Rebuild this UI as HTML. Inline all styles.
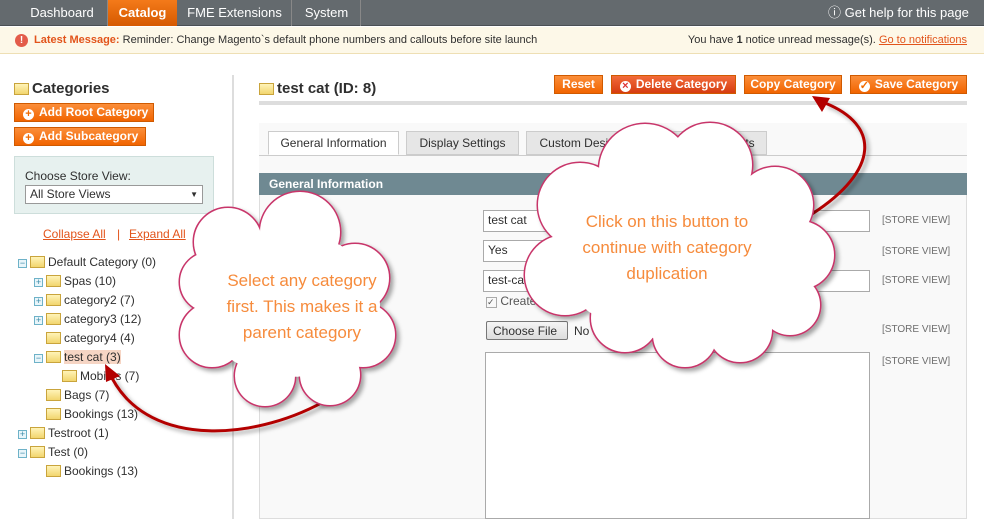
<!DOCTYPE html>
<html><head><style>
*{margin:0;padding:0;box-sizing:border-box}
body{width:984px;height:519px;overflow:hidden;background:#fff;font-family:"Liberation Sans",Arial,sans-serif;font-size:12px;color:#2f2f2f;position:relative}
.abs{position:absolute}
.nav{left:0;top:0;width:984px;height:26px;background:#646a6e;border-bottom:1px solid #4b5054}
.nav span{position:absolute;top:0;height:26px;line-height:26px;color:#fff;font-size:13px;text-align:center}
.msg{left:0;top:27px;width:984px;height:27px;background:#fdf8e8;border-bottom:1px solid #eedfb4;line-height:27px;font-size:11px}
.btn{position:absolute;height:19px;background:linear-gradient(#fb8e3a,#f16400);border:1px solid #d05a00;color:#fff;font-weight:bold;font-size:12px;line-height:17px;text-align:center}
.ic{display:inline-block;width:11px;height:11px;border-radius:50%;background:#fff;color:#f06a00;font-size:11px;line-height:11px;text-align:center;vertical-align:-1px;margin-right:5px}
.tree div{position:absolute;font-size:12px;white-space:nowrap}
.fold{display:inline-block;width:15px;height:12px;background:linear-gradient(#fff3b8,#f2d56e);border:1px solid #c9a43c;vertical-align:-2px;margin-right:3px}
.pm{display:inline-block;width:9px;height:9px;border:1px solid #6eb2c8;background:#e8f5fa;vertical-align:0;margin-right:3px;font-size:9px;line-height:7px;text-align:center;color:#3a8aa8}
.sv{position:absolute;left:882px;font-size:10px;color:#6e6e6e}
.inp{position:absolute;border:1px solid #aaa;background:#fff;font-size:12px;padding:2px 4px;height:22px}
.tab{position:absolute;top:131px;height:24px;border:1px solid #ccc;background:#e6e6e6;line-height:22px;font-size:12px;text-align:center}
</style></head><body>
<div class="abs nav">
<span style="left:18px;width:88px">Dashboard</span>
<span style="left:107px;width:70px;background:linear-gradient(#f47a1a,#d55900);font-weight:bold;border-left:1px solid #888">Catalog</span>
<span style="left:178px;width:114px;border-right:1px solid #888">FME Extensions</span>
<span style="left:293px;width:68px;border-right:1px solid #888">System</span>
<span style="left:828px;width:150px;text-align:left">&#9432; Get help for this page</span>
</div>
<div class="abs msg"><span style="position:absolute;left:15px;top:7px;width:13px;height:13px;border-radius:50%;background:#e35c4a;color:#fff;font-size:10px;line-height:13px;text-align:center;font-weight:bold">!</span>
<span style="position:absolute;left:34px"><b style="color:#e2541b">Latest Message:</b> Reminder: Change Magento`s default phone numbers and callouts before site launch</span>
<span style="position:absolute;right:17px">You have <b>1</b> notice unread message(s). <u style="color:#e2541b">Go to notifications</u></span></div>
<div class="abs" style="left:232px;top:75px;width:2px;height:444px;background:#ddd"></div>
<div class="abs" style="left:14px;top:80px;font-size:15px;font-weight:bold"><span class="fold"></span>Categories</div>
<div class="btn" style="left:14px;top:103px;width:140px;text-align:left;padding-left:8px"><span class="ic">+</span>Add Root Category</div>
<div class="btn" style="left:14px;top:127px;width:132px;text-align:left;padding-left:8px"><span class="ic">+</span>Add Subcategory</div>
<div class="abs" style="left:14px;top:156px;width:200px;height:58px;background:#e7f1ef;border:1px solid #cddedb;padding:12px 10px;font-size:12px">Choose Store View:<div style="margin-top:2px;width:178px;height:19px;border:1px solid #999;background:#fff;padding:1px 4px">All Store Views<span style="float:right;font-size:8px;margin-top:3px">&#9660;</span></div></div>
<div class="abs" style="left:43px;top:227px;color:#e2541b;text-decoration:underline">Collapse All</div>
<div class="abs" style="left:117px;top:227px;color:#e2541b">|</div>
<div class="abs" style="left:129px;top:227px;color:#e2541b;text-decoration:underline">Expand All</div>
<div class="tree">
<div style="left:18px;top:255px"><span class="pm">−</span><span class="fold"></span>Default Category (0)</div>
<div style="left:34px;top:274px"><span class="pm">+</span><span class="fold"></span>Spas (10)</div>
<div style="left:34px;top:293px"><span class="pm">+</span><span class="fold"></span>category2 (7)</div>
<div style="left:34px;top:312px"><span class="pm">+</span><span class="fold"></span>category3 (12)</div>
<div style="left:46px;top:331px"><span class="fold"></span>category4 (4)</div>
<div style="left:34px;top:350px"><span class="pm">−</span><span class="fold"></span><span style="background:#f6d5c4">test cat (3)</span></div>
<div style="left:62px;top:369px"><span class="fold"></span>Mobiles (7)</div>
<div style="left:46px;top:388px"><span class="fold"></span>Bags (7)</div>
<div style="left:46px;top:407px"><span class="fold"></span>Bookings (13)</div>
<div style="left:18px;top:426px"><span class="pm">+</span><span class="fold"></span>Testroot (1)</div>
<div style="left:18px;top:445px"><span class="pm">−</span><span class="fold"></span>Test (0)</div>
<div style="left:46px;top:464px"><span class="fold"></span>Bookings (13)</div>
</div>
<div class="abs" style="left:259px;top:80px;font-size:15px;font-weight:bold"><span class="fold"></span>test cat (ID: 8)</div>
<div class="abs" style="left:259px;top:101px;width:708px;height:4px;background:#ddd"></div>
<div class="btn" style="left:554px;top:75px;width:49px">Reset</div>
<div class="btn" style="left:611px;top:75px;width:125px;background:linear-gradient(#f26b3a,#d63c10)"><span class="ic" style="color:#d33">×</span>Delete Category</div>
<div class="btn" style="left:744px;top:75px;width:98px">Copy Category</div>
<div class="btn" style="left:850px;top:75px;width:117px"><span class="ic">✓</span>Save Category</div>
<div class="abs" style="left:259px;top:123px;width:708px;height:396px;background:#f9f9f9"></div>
<div class="tab" style="left:268px;width:131px;background:#fff;border-bottom-color:#fff">General Information</div>
<div class="tab" style="left:406px;width:113px">Display Settings</div>
<div class="tab" style="left:526px;width:109px">Custom Design</div>
<div class="tab" style="left:643px;width:124px">Category Products</div>
<div class="abs" style="left:259px;top:155px;width:708px;height:1px;background:#ccc"></div>
<div class="abs" style="left:259px;top:173px;width:708px;height:22px;background:#6f8992;color:#fff;font-weight:bold;line-height:22px;padding-left:10px">General Information</div>
<div class="abs" style="left:259px;top:195px;width:708px;height:324px;border:1px solid #ddd;border-top:0"></div>
<div class="abs" style="left:270px;top:215px">Name</div>
<div class="inp" style="left:483px;top:210px;width:387px">test cat</div>
<div class="inp" style="left:483px;top:240px;width:140px">Yes</div>
<div class="inp" style="left:483px;top:270px;width:387px">test-cat</div>
<div class="abs" style="left:486px;top:294px;color:#555"><span style="display:inline-block;width:11px;height:11px;border:1px solid #aaa;font-size:9px;line-height:9px">✓</span> Create Permanent Redirect</div>
<div class="abs" style="left:486px;top:321px;width:82px;height:19px;border:1px solid #777;border-radius:2px;background:linear-gradient(#f5f5f5,#ddd);padding:2px 6px">Choose File</div>
<div class="abs" style="left:574px;top:324px">No file chosen</div>
<div class="inp" style="left:485px;top:352px;width:385px;height:167px"></div>
<div class="sv" style="top:215px">[STORE VIEW]</div>
<div class="sv" style="top:246px">[STORE VIEW]</div>
<div class="sv" style="top:275px">[STORE VIEW]</div>
<div class="sv" style="top:324px">[STORE VIEW]</div>
<div class="sv" style="top:356px">[STORE VIEW]</div>
<svg class="abs" style="left:0;top:0" width="984" height="519">
<defs><filter id="sh"><feDropShadow dx="3" dy="3" stdDeviation="2" flood-opacity="0.35"/></filter></defs>
<g fill="none" stroke="#b30000" stroke-width="3" filter="url(#sh)">
<path d="M330,398 C260,440 150,450 112,378"/>
<path d="M812,214 C880,170 880,125 825,103"/>
</g>
<polygon points="105,364 120,376 106,382" fill="#b30000"/>
<polygon points="812,96 830,98 822,112" fill="#b30000"/>
<g filter="url(#sh)">
<g fill="#fff" stroke="#c8366a" stroke-width="3">
<circle cx="228" cy="242" r="34"/><circle cx="300" cy="232" r="40"/><circle cx="355" cy="278" r="34"/><circle cx="363" cy="335" r="32"/><circle cx="330" cy="375" r="30"/><circle cx="265" cy="376" r="30"/><circle cx="212" cy="335" r="32"/><circle cx="210" cy="282" r="30"/>
<circle cx="580" cy="205" r="42"/><circle cx="645" cy="170" r="46"/><circle cx="710" cy="165" r="42"/><circle cx="775" cy="205" r="38"/><circle cx="800" cy="255" r="34"/><circle cx="790" cy="305" r="30"/><circle cx="740" cy="330" r="32"/><circle cx="685" cy="335" r="32"/><circle cx="625" cy="318" r="34"/><circle cx="565" cy="275" r="40"/>
</g>
<g fill="#fff">
<circle cx="228" cy="242" r="34"/><circle cx="300" cy="232" r="40"/><circle cx="355" cy="278" r="34"/><circle cx="363" cy="335" r="32"/><circle cx="330" cy="375" r="30"/><circle cx="265" cy="376" r="30"/><circle cx="212" cy="335" r="32"/><circle cx="210" cy="282" r="30"/><ellipse cx="290" cy="305" rx="90" ry="72"/>
<circle cx="580" cy="205" r="42"/><circle cx="645" cy="170" r="46"/><circle cx="710" cy="165" r="42"/><circle cx="775" cy="205" r="38"/><circle cx="800" cy="255" r="34"/><circle cx="790" cy="305" r="30"/><circle cx="740" cy="330" r="32"/><circle cx="685" cy="335" r="32"/><circle cx="625" cy="318" r="34"/><circle cx="565" cy="275" r="40"/><ellipse cx="680" cy="250" rx="125" ry="90"/>
</g></g>
<g fill="#f68b3c" font-family="Liberation Sans, sans-serif" font-size="17" text-anchor="middle">
<text x="302" y="286">Select any category</text>
<text x="302" y="312">first. This makes it a</text>
<text x="302" y="338">parent category</text>
<text x="667" y="227">Click on this button to</text>
<text x="667" y="253">continue with category</text>
<text x="667" y="279">duplication</text>
</g>
</svg>
</body></html>
